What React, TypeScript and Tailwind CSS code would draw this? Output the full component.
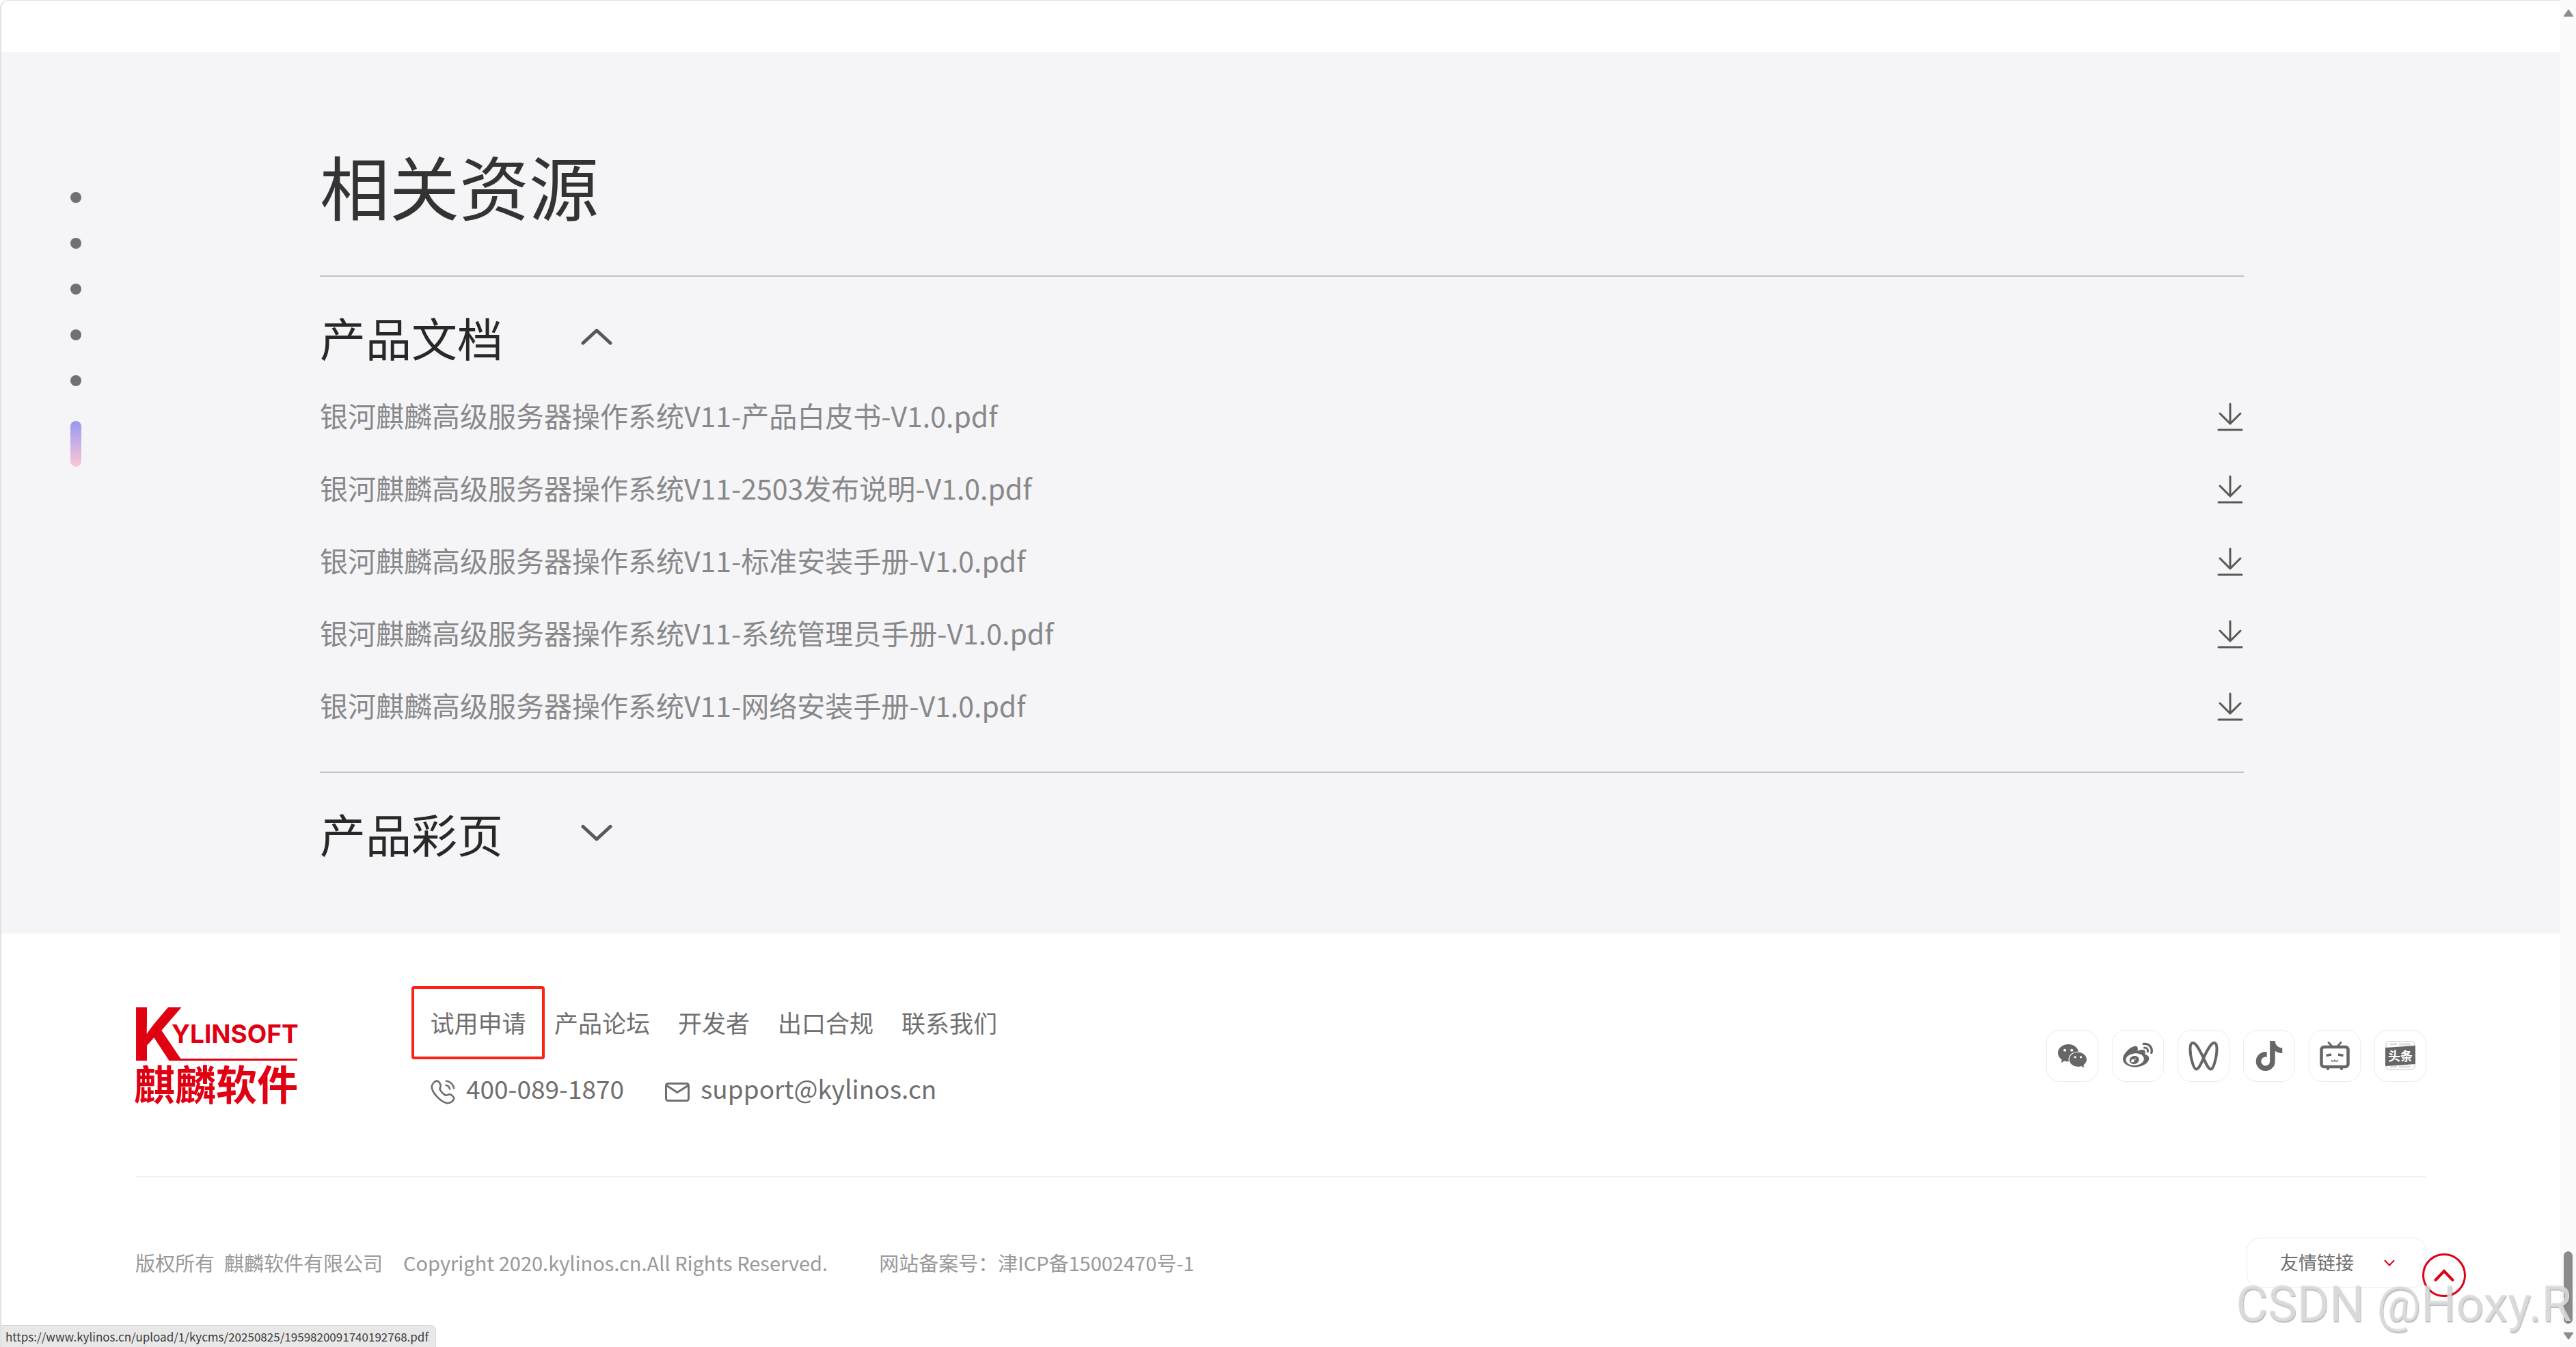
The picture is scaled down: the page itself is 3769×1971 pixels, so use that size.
import { useState } from "react";
import { AiFillWechat } from "react-icons/ai";
import { FaWeibo, FaTiktok } from "react-icons/fa";

const documents = [
  "银河麒麟高级服务器操作系统V11-产品白皮书-V1.0.pdf",
  "银河麒麟高级服务器操作系统V11-2503发布说明-V1.0.pdf",
  "银河麒麟高级服务器操作系统V11-标准安装手册-V1.0.pdf",
  "银河麒麟高级服务器操作系统V11-系统管理员手册-V1.0.pdf",
  "银河麒麟高级服务器操作系统V11-网络安装手册-V1.0.pdf",
];

const sections = ["产品概述", "产品特性", "产品优势", "应用场景", "成功案例"];

function Chevron({ up }: { up: boolean }) {
  return (
    <svg viewBox="0 0 46 26" className="h-[26px] w-[46px]" fill="none" stroke="#585858" strokeWidth="5" strokeLinecap="round" strokeLinejoin="round" aria-hidden="true">
      <path d={up ? "M3 22 23 3.500 43 22" : "M3 3.500 23 22 43 3.500"} />
    </svg>
  );
}

function DownloadIcon() {
  return (
    <svg viewBox="0 -4 40 46" className="h-[46px] w-10" fill="none" stroke="#585858" strokeWidth="3" strokeLinecap="round" strokeLinejoin="round" aria-hidden="true">
      <path d="M20 2V31M5 16 20 31 35 16M3 40H37" />
    </svg>
  );
}

function PhoneIcon() {
  return (
    <svg viewBox="0 0 36 36" className="mt-3 size-9" fill="none" stroke="#6f6f6f" strokeWidth="2.600" strokeLinecap="round" strokeLinejoin="round" aria-hidden="true">
      <path d="M9 1.600C6 2 2 6 1.600 10.500 2.500 19 14 32 24 34.300 29 34.500 33.500 31 34.300 27.500 34 24.500 30.500 21.800 28 21.300 25.500 21.200 24 23.500 21.500 22.500 18 20.500 15 17 13.500 13.800 13.500 11.500 15 10.500 14.600 7.500 13.500 4.500 11.500 1.600 9 1.600Z" />
      <path d="M23 1.800C29 2.500 33.500 7 34.200 12.500M22.500 8C25.500 8.500 27.500 10.500 28 13.500" />
    </svg>
  );
}

function MailIcon() {
  return (
    <svg viewBox="0 0 36 30" className="mt-3 h-[30px] w-9" fill="none" stroke="#6f6f6f" strokeWidth="3" strokeLinejoin="round" aria-hidden="true">
      <rect x="1.500" y="2.500" width="33" height="25" rx="3" />
      <path d="M2.500 5.500 18 15.500 33.500 5.500" />
    </svg>
  );
}

function ChannelsIcon() {
  return (
    <svg viewBox="0 0 44 44" className="size-11" fill="none" stroke="#666" strokeWidth="4" strokeLinejoin="round" aria-hidden="true">
      <path d="M33 41.500C28 41.500 24 29 20.500 22 16 13 11 3 6.500 3 4 3 2.500 6 2.500 12 2.500 22 7 41.500 11.500 41.500 16 41.500 20 29 23.500 22 28 13 33 3 37.500 3 40 3 41.500 6 41.500 12 41.500 22 37 41.500 33 41.500Z" />
    </svg>
  );
}

function BilibiliIcon() {
  return (
    <svg viewBox="0 0 44 44" className="size-11" fill="none" stroke="#666" strokeLinecap="round" aria-hidden="true">
      <path d="M13 2.500 18 8M31 2.500 26 8" strokeWidth="2.800" />
      <rect x="2.500" y="9" width="39" height="29" rx="4" strokeWidth="4.500" />
      <path d="M12 39V41M32 39V41" strokeWidth="4" />
      <path d="M9.500 21.500 17 20M34.500 21.500 27 20" strokeWidth="3.400" strokeLinecap="butt" />
      <path d="M17.500 28.500C18 30.500 21 30.500 22 28.500 23 30.500 26 30.500 26.500 28.500" strokeWidth="1.500" />
    </svg>
  );
}

function ToutiaoIcon() {
  return (
    <svg viewBox="0 0 44 44" className="size-11" aria-hidden="true">
      <rect x="1" y="1" width="42" height="41" rx="5" fill="#fff" stroke="#c4c4c4" />
      <path d="M7 5H17M20 5H37M7 38H17M20 38H37" stroke="#ddd" strokeWidth="3" />
      <path d="M0 10 44 7V34L0 37Z" fill="#666" />
      <text x="22" y="29" textAnchor="middle" fontSize="18" fontWeight="700" fill="#fff">头条</text>
    </svg>
  );
}

function Logo() {
  return (
    <svg viewBox="0 0 238 146" className="h-[146px] w-[238px] overflow-visible" fill="#e00012" fontWeight="700" role="img" aria-label="麒麟软件">
      <text x="-6" y="80" fontSize="107" fontFamily="Inter, sans-serif">K</text>
      <text x="53" y="54" fontSize="37" fontFamily="Inter, sans-serif">YLINSOFT</text>
      <rect x="62" y="77" width="175" height="3" />
      <text x="-2" y="138" fontSize="60">麒麟软件</text>
    </svg>
  );
}

const socials = [
  { name: "微信", icon: <AiFillWechat className="size-12" /> },
  { name: "微博", icon: <FaWeibo className="size-11" /> },
  { name: "视频号", icon: <ChannelsIcon /> },
  { name: "抖音", icon: <FaTiktok className="h-[44px] w-[40px]" /> },
  { name: "哔哩哔哩", icon: <BilibiliIcon /> },
  { name: "头条", icon: <ToutiaoIcon /> },
];

export default function App() {
  const [docsOpen, setDocsOpen] = useState(true);
  const [flyersOpen, setFlyersOpen] = useState(false);

  return (
    <div className="relative flex min-h-screen overflow-hidden bg-white font-['Noto_Sans_CJK_SC',sans-serif]">
      <div className="relative min-w-0 flex-1 rounded-tl-xl border-l-2 border-t border-[#e2e2e4]">
        <main className="mt-[75px] bg-[#f5f5f7] pt-[120px] pb-[93px]">
          <nav aria-label="页面导航" className="absolute left-[101px] top-[280px] flex flex-col gap-[51px]">
            {sections.map((name) => (
              <a key={name} href="#" aria-label={name} className="size-4 rounded-full bg-[#707175]" />
            ))}
            <a href="#" aria-label="相关资源" aria-current="true" className="h-[67px] w-4 rounded-full bg-linear-to-b from-[#9897f1] to-[#fdc6d3]" />
          </nav>
          <div className="mr-[463px] ml-[466px]">
            <h1 className="pb-[57px] text-[102px] leading-[150px] text-[#333]">相关资源</h1>
            <section className="border-t-2 border-[#c0c2c7] pb-11">
              <h2>
                <button type="button" aria-expanded={docsOpen} onClick={() => setDocsOpen(!docsOpen)} className="mt-[34px] flex h-[108px] items-center gap-[114px] text-[67px] text-[#282828]">
                  产品文档
                  <Chevron up={docsOpen} />
                </button>
              </h2>
              {docsOpen && (
                <ul className="mt-2">
                  {documents.map((name) => (
                    <li key={name}>
                      <a href="#" className="flex h-[106px] items-center justify-between text-[41px] text-[#88888b]">
                        {name}
                        <DownloadIcon />
                      </a>
                    </li>
                  ))}
                </ul>
              )}
            </section>
            <section className="border-t-2 border-[#c0c2c7]">
              <h2>
                <button type="button" aria-expanded={flyersOpen} onClick={() => setFlyersOpen(!flyersOpen)} className="mt-[34px] flex h-[108px] items-center gap-[114px] text-[67px] text-[#282828]">
                  产品彩页
                  <Chevron up={flyersOpen} />
                </button>
              </h2>
            </section>
          </div>
        </main>

        <footer className="mx-[196px] pt-[77px]">
          <div className="flex h-[280px] items-start justify-between border-b-2 border-[#f1f1f1]">
            <div className="flex items-start">
              <a href="#" className="mt-[29px]">
                <Logo />
              </a>
              <div className="ml-[166px] text-[#6f6f6f]">
                <nav aria-label="页脚" className="flex items-center text-[35px]">
                  <a href="#" className="flex h-[107px] w-[195px] items-center justify-center rounded border-4 border-[#ff2013]">试用申请</a>
                  <div className="ml-[14px] flex gap-[41px]">
                    <a href="#">产品论坛</a>
                    <a href="#">开发者</a>
                    <a href="#">出口合规</a>
                    <a href="#">联系我们</a>
                  </div>
                </nav>
                <div className="ml-7 mt-[14px] flex items-center text-[37px] leading-[56px]">
                  <a href="tel:400-089-1870" className="flex items-center gap-4">
                    <PhoneIcon />
                    400-089-1870
                  </a>
                  <a href="mailto:support@kylinos.cn" className="ml-[60px] flex items-center gap-4">
                    <MailIcon />
                    support@kylinos.cn
                  </a>
                </div>
              </div>
            </div>
            <ul className="mt-16 flex gap-5 text-[#666]">
              {socials.map((s) => (
                <li key={s.name}>
                  <a href="#" aria-label={s.name} className="flex size-[76px] items-center justify-center rounded-[20px] border border-[#ececec]">
                    {s.icon}
                  </a>
                </li>
              ))}
            </ul>
          </div>
          <div className="mt-[88px] flex items-center justify-between">
            <p className="flex text-[29px] text-[#999]">
              <span>版权所有</span>
              <span className="ml-[14px]">麒麟软件有限公司</span>
              <span className="ml-[30px]">Copyright 2020.kylinos.cn.All Rights Reserved.</span>
              <a href="#" className="ml-[75px]">网站备案号：津ICP备15002470号-1</a>
            </p>
            <button type="button" className="flex h-[73px] w-[263px] items-center rounded-[20px] border border-[#ececec] pl-12 text-[27px] text-[#6f6f6f]">
              友情链接
              <svg viewBox="0 0 16 10" className="ml-11 h-[10px] w-4" fill="none" stroke="#e00012" strokeWidth="2" aria-hidden="true">
                <path d="M1 1 8 8.500 15 1" />
              </svg>
            </button>
          </div>
        </footer>

        <button type="button" aria-label="返回顶部" className="absolute right-[138px] bottom-[73px] flex size-16 items-center justify-center rounded-full border-3 border-[#e00012]">
          <svg viewBox="0 0 30 20" className="h-5 w-[30px]" fill="none" stroke="#e00012" strokeWidth="4" strokeLinecap="round" aria-hidden="true">
            <path d="M2.500 17 15 4 27.500 17" />
          </svg>
        </button>
        <div className="absolute bottom-0 left-0 flex h-8 items-center rounded-tr-lg border-t border-r border-[#d8d8d8] bg-[#e8e8e8] pr-2.5 pl-1.5 text-[17px] text-[#3b3b3b]">
          https://www.kylinos.cn/upload/1/kycms/20250825/1959820091740192768.pdf
        </div>
      </div>

      <div className="flex w-[23px] flex-col items-center bg-[#fbfbfb]" aria-hidden="true">
        <svg viewBox="0 0 16 12" className="mt-[13px] h-3 w-4" fill="#8b8b8b">
          <path d="M8 1 15 11H1Z" stroke="#8b8b8b" strokeWidth="1" strokeLinejoin="round" />
        </svg>
        <div className="mt-auto mb-3 h-[106px] w-[13px] rounded-full bg-[#8b8b8b]" />
        <svg viewBox="0 0 16 12" className="mb-[10px] h-3 w-4" fill="#8b8b8b">
          <path d="M8 11 15 1H1Z" stroke="#8b8b8b" strokeWidth="1" strokeLinejoin="round" />
        </svg>
      </div>

      <p className="pointer-events-none absolute right-1.5 bottom-5 font-['Roboto',sans-serif] text-[72px] leading-[84px] text-[#dedede]/85 [text-shadow:1px_2px_1px_rgba(120,120,120,0.5)]">
        CSDN @Hoxy.R
      </p>
    </div>
  );
}
